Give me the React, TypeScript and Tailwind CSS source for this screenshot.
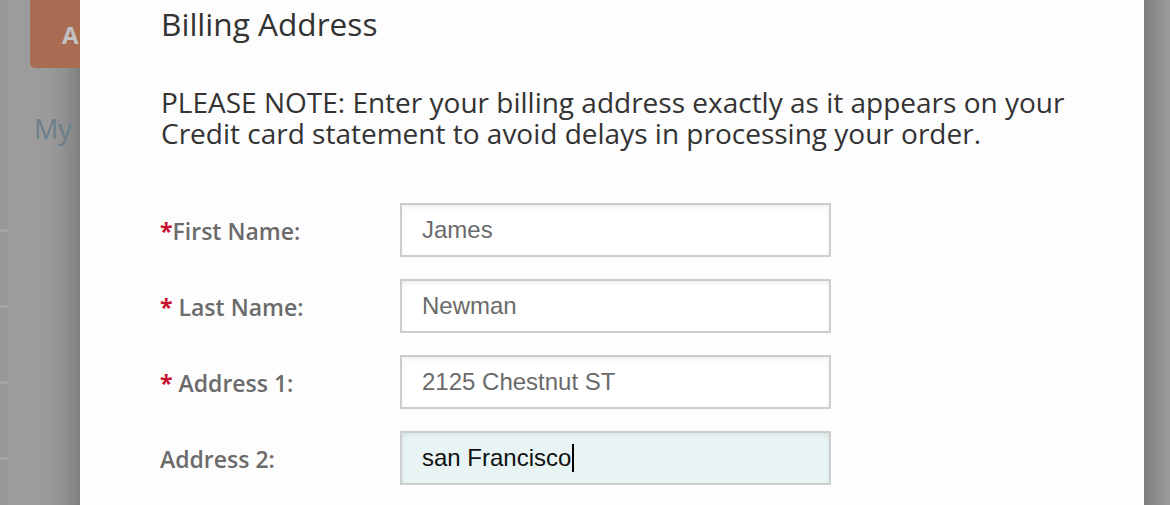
import React from 'react';

const fields = [
  { label: 'First Name:', required: true, gap: false, value: 'James' },
  { label: 'Last Name:', required: true, gap: true, value: 'Newman' },
  { label: 'Address 1:', required: true, gap: true, value: '2125 Chestnut ST' },
  { label: 'Address 2:', required: false, gap: false, value: 'san Francisco', active: true },
];

const Backdrop: React.FC = () => (
  <div className="relative w-[80px] shrink-0 h-full bg-[linear-gradient(to_right,#979797_0px,#979797_8px,#9c9c9c_8px,#9b9b9b_48px,#8f8f8f_66px,#7f7f7f_80px)]">
    {/* orange button peeking out */}
    <div className="ml-[30px] h-[68px] rounded-bl-[5px] bg-[#a86c52] flex items-center pl-[32px] pt-[2px]">
      <span className="font-['Open_Sans',sans-serif] font-bold text-[24px] text-[#c2c2c2]">A</span>
    </div>
    <div className="pl-[34px] pt-[43px] font-['Open_Sans',sans-serif] text-[27px] leading-[36px] text-[#6b7f8b]">My</div>
    {/* list row separators */}
    <div className="absolute left-0 top-[229px] w-[8px] h-[3px] bg-[#a3a3a3]" />
    <div className="absolute left-0 top-[305px] w-[8px] h-[3px] bg-[#a3a3a3]" />
    <div className="absolute left-0 top-[381px] w-[8px] h-[3px] bg-[#a3a3a3]" />
    <div className="absolute left-0 top-[457px] w-[8px] h-[3px] bg-[#a3a3a3]" />
  </div>
);

const App: React.FC = () => {
  return (
    <div className="flex w-[1170px] h-[505px] overflow-hidden bg-[#9a9a9a]">
      <Backdrop />

      {/* Modal */}
      <div className="w-[1064px] shrink-0 h-full bg-[#fdfdfd] pl-[81px] pt-[5px] font-['Open_Sans',sans-serif]">
        <h2 className="text-[31.6px] leading-[38px] text-[#333333]">Billing Address</h2>

        <p className="mt-[44px] text-[28px] leading-[31px] text-[#333333]">
          PLEASE NOTE: Enter your billing address exactly as it appears on your
          <br />
          Credit card statement to avoid delays in processing your order.
        </p>

        <div className="mt-[54px] flex flex-col gap-[22px]">
          {fields.map((f) => (
            <div key={f.label} className="flex items-center -ml-[1px]">
              <div className="w-[240px] pt-[3px] text-[23px] font-semibold text-[#6b6b6b]">
                {f.required && <span className="font-bold text-[#c8102e]">*</span>}
                {f.gap && ' '}
                {f.label}
              </div>
              <div
                className={`w-[431px] h-[54px] border-2 border-[#cdcdcd] shadow-[inset_0_2px_4px_rgba(0,0,0,0.07)] flex items-center pl-[20px] font-['Liberation_Sans',Arial,sans-serif] text-[24px] ${
                  f.active ? 'bg-[#e8f3f4] text-[#111111]' : 'bg-white text-[#6a6a6a]'
                }`}
              >
                {f.value}
                {f.active && <span className="w-[2px] h-[28px] bg-black ml-[1px]" />}
              </div>
            </div>
          ))}
        </div>
      </div>

      <div className="flex-1 h-full bg-[linear-gradient(to_right,#7f7f7f,#9b9b9b)]" />
    </div>
  );
};

export default App;
